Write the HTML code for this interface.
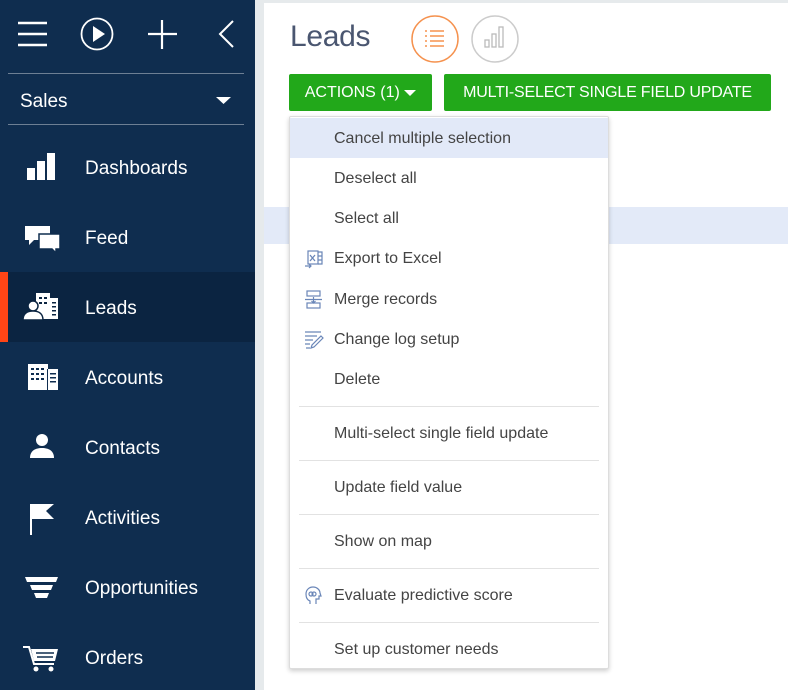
<!DOCTYPE html>
<html><head><style>
*{margin:0;padding:0;box-sizing:border-box}
body{width:788px;height:690px;overflow:hidden;background:#fff;font-family:"Liberation Sans",sans-serif;position:relative}
.sb{position:absolute;left:0;top:0;width:255px;height:690px;background:#0f2d4f}
.strip{position:absolute;left:255px;top:0;width:9px;height:690px;background:#e6eaec}
.topstrip{position:absolute;left:264px;top:0;width:524px;height:3px;background:#e6eaec}
.hr{position:absolute;left:8px;width:236px;height:1px;background:#6d7f94}
.nav{position:absolute;left:0;width:255px;height:70px;color:#fff;font-size:19px}
.nav span{position:absolute;left:85px;top:50%;transform:translateY(-50%);margin-top:2px}
.nav svg{position:absolute;left:22px;top:19px}
.act{background:#0b2441}
.act:before{content:"";position:absolute;left:0;top:0;width:8px;height:70px;background:#ff4516}
.btn{position:absolute;top:74px;height:37px;background:#22a81a;color:#fff;font-size:16px;line-height:38px;text-align:center;border-radius:2px}
.dd{position:absolute;left:289px;top:116px;width:320px;height:553px;background:#fff;border:1px solid #ddd;box-shadow:0 2px 5px rgba(0,0,0,.2);border-radius:2px}
.it{position:absolute;left:0;width:318px;height:40px;font-size:16px;color:#444;line-height:42px;padding-left:44px}
.sep{position:absolute;left:9px;width:300px;height:1px;background:#e2e2e2}
.it svg{position:absolute;left:14px;top:11px}
</style></head><body>
<div class="sb">
<svg style="position:absolute;left:0;top:0" width="255" height="70">
<g stroke="#fff" stroke-width="2.5" fill="none">
<path d="M18 23h29M18 34h29M18 45h29"/>
<circle cx="97" cy="34" r="15.5" stroke-width="1.8"/>
<path d="M162 20v29M148 34h29" stroke-width="2.2"/>
<path d="M233 21l-13 13 13 13" stroke-width="2"/>
</g>
<path d="M93 26v16l12-8z" fill="#fff"/>
</svg>
<div class="hr" style="top:73px"></div>
<div style="position:absolute;left:20px;top:91px;color:#fff;font-size:19px">Sales</div>
<svg style="position:absolute;left:216px;top:97px" width="15" height="8"><path d="M0 0h15l-7.5 7z" fill="#fff"/></svg>
<div class="hr" style="top:124px"></div>

<div class="nav" style="top:132px"><svg width="36" height="32"><path d="M5 17h8v12H5zM15 10h8v19h-8zM25 2h8v27h-8z" fill="#fff"/></svg><span>Dashboards</span></div>
<div class="nav" style="top:202px"><svg width="40" height="32"><path d="M3 5h25v14H12l-5 5v-5H3z" fill="#fff"/><path d="M17 13h21v15h-4v4l-4-4H17z" fill="#fff" stroke="#0f2d4f" stroke-width="1.5"/></svg><span>Feed</span></div>
<div class="nav act" style="top:272px"><svg width="40" height="32"><path d="M14 2h14v26H14zM28 7h8v21h-8z" fill="#fff"/><g fill="#0b2441"><rect x="17" y="6" width="3" height="2"/><rect x="22" y="6" width="3" height="2"/><rect x="17" y="11" width="3" height="2"/><rect x="22" y="11" width="3" height="2"/><rect x="30" y="11" width="4" height="1.5"/><rect x="30" y="15" width="4" height="1.5"/><rect x="30" y="19" width="4" height="1.5"/><rect x="30" y="23" width="4" height="1.5"/></g><circle cx="11" cy="15" r="5" fill="#fff" stroke="#0b2441" stroke-width="1.5"/><path d="M1 29c0-6 4-9 10-9s10 3 10 9z" fill="#fff" stroke="#0b2441" stroke-width="1.5"/></svg><span>Leads</span></div>
<div class="nav" style="top:342px"><svg width="40" height="32"><path d="M6 3h20v26H6zM26 8h10v21H26z" fill="#fff"/><g fill="#0f2d4f"><rect x="9" y="7" width="3" height="2"/><rect x="14" y="7" width="3" height="2"/><rect x="19" y="7" width="3" height="2"/><rect x="9" y="12" width="3" height="2"/><rect x="14" y="12" width="3" height="2"/><rect x="19" y="12" width="3" height="2"/><rect x="9" y="17" width="3" height="2"/><rect x="14" y="17" width="3" height="2"/><rect x="19" y="17" width="3" height="2"/><rect x="25" y="8" width="1" height="21"/><rect x="28" y="12" width="6" height="1.5"/><rect x="28" y="16" width="6" height="1.5"/><rect x="28" y="20" width="6" height="1.5"/></g></svg><span>Accounts</span></div>
<div class="nav" style="top:412px"><svg width="40" height="32"><circle cx="20" cy="9" r="6" fill="#fff"/><path d="M8 27c0-7 5-10 12-10s12 3 12 10z" fill="#fff"/></svg><span>Contacts</span></div>
<div class="nav" style="top:482px"><svg width="40" height="36"><path d="M9 3v31" stroke="#fff" stroke-width="2"/><path d="M10 3h22l-8 7 8 8H10z" fill="#fff"/></svg><span>Activities</span></div>
<div class="nav" style="top:552px"><svg width="40" height="32"><path d="M3 6h33l-2 5H5zM8 14h23l-2 5H10zM12 22h15l-2 5H14z" fill="#fff"/></svg><span>Opportunities</span></div>
<div class="nav" style="top:622px"><svg width="40" height="36"><path d="M1 6h6l5 17h20" stroke="#fff" stroke-width="2" fill="none"/><path d="M9 8h27l-3 12H12z" fill="#fff"/><path d="M14 12h18M15 16h16" stroke="#0f2d4f" stroke-width="1.5"/><circle cx="14" cy="28" r="2.5" fill="#fff"/><circle cx="29" cy="28" r="2.5" fill="#fff"/></svg><span>Orders</span></div>
</div>
<div class="strip"></div>
<div class="topstrip"></div>

<div style="position:absolute;left:290px;top:20px;font-size:30px;color:#4a5670;letter-spacing:-0.3px">Leads</div>
<svg style="position:absolute;left:410px;top:14px" width="112" height="52">
<circle cx="25" cy="25" r="23" fill="none" stroke="#f5924f" stroke-width="1.5"/>
<g stroke="#f5924f" stroke-width="1.6"><path d="M15 17h2M15 22h2M15 27h2M15 32h2M20 17h14M20 22h14M20 27h14M20 32h14"/></g>
<circle cx="85" cy="25" r="23" fill="none" stroke="#ccc" stroke-width="1.5"/>
<g fill="none" stroke="#bbb" stroke-width="1.3"><rect x="75" y="26" width="4" height="7"/><rect x="82" y="20" width="4" height="13"/><rect x="89" y="13" width="4" height="20"/></g>
</svg>
<div class="btn" style="left:289px;width:143px">ACTIONS (1) <span style="display:inline-block;width:0;height:0;border-left:6px solid transparent;border-right:6px solid transparent;border-top:6px solid #fff;vertical-align:middle"></span></div>
<div class="btn" style="left:444px;width:327px;letter-spacing:-0.2px">MULTI-SELECT SINGLE FIELD UPDATE</div>

<div style="position:absolute;left:264px;top:207px;width:524px;height:37px;background:#e3eaf8"></div>

<div class="dd">
<div class="it" style="top:1px;background:#e2e9f8">Cancel multiple selection</div>
<div class="it" style="top:41px">Deselect all</div>
<div class="it" style="top:81px">Select all</div>
<div class="it" style="top:121px"><svg width="20" height="20"><g fill="none" stroke="#6a86b8" stroke-width="1.2"><rect x="4" y="2" width="10" height="13"/><path d="M14 3h4v12h-4M14 7h4M14 11h4M1 17h6m-2-2l2 2-2 2"/></g><path d="M6 6l5 6M11 6l-5 6" stroke="#6a86b8" stroke-width="1.3"/></svg>Export to Excel</div>
<div class="it" style="top:162px"><svg width="20" height="20"><g fill="none" stroke="#6a86b8" stroke-width="1.2"><rect x="3" y="1" width="13" height="5"/><rect x="3" y="13" width="13" height="5"/><path d="M1 9.5h17M9.5 7v6m-2-2l2 2 2-2"/></g></svg>Merge records</div>
<div class="it" style="top:202px"><svg width="20" height="20"><g fill="none" stroke="#6a86b8" stroke-width="1.2"><path d="M1 2h16M1 6h12M1 10h8M1 14h5M2 18h4"/><path d="M17 6l2 2-9 9-3 1 1-3z"/></g></svg>Change log setup</div>
<div class="it" style="top:242px">Delete</div>
<div class="sep" style="top:289px"></div>
<div class="it" style="top:296px">Multi-select single field update</div>
<div class="sep" style="top:343px"></div>
<div class="it" style="top:350px">Update field value</div>
<div class="sep" style="top:397px"></div>
<div class="it" style="top:404px">Show on map</div>
<div class="sep" style="top:451px"></div>
<div class="it" style="top:458px"><svg width="20" height="20"><g fill="none" stroke="#6a86b8" stroke-width="1.2"><path d="M6 18v-3c-3-1-4-4-4-7 0-4 3-7 7-7s7 3 7 6l1 3h-2v3h-3v5"/><circle cx="7" cy="8" r="2"/><circle cx="10" cy="8" r="2"/></g></svg>Evaluate predictive score</div>
<div class="sep" style="top:505px"></div>
<div class="it" style="top:512px">Set up customer needs</div>
</div>
</body></html>
